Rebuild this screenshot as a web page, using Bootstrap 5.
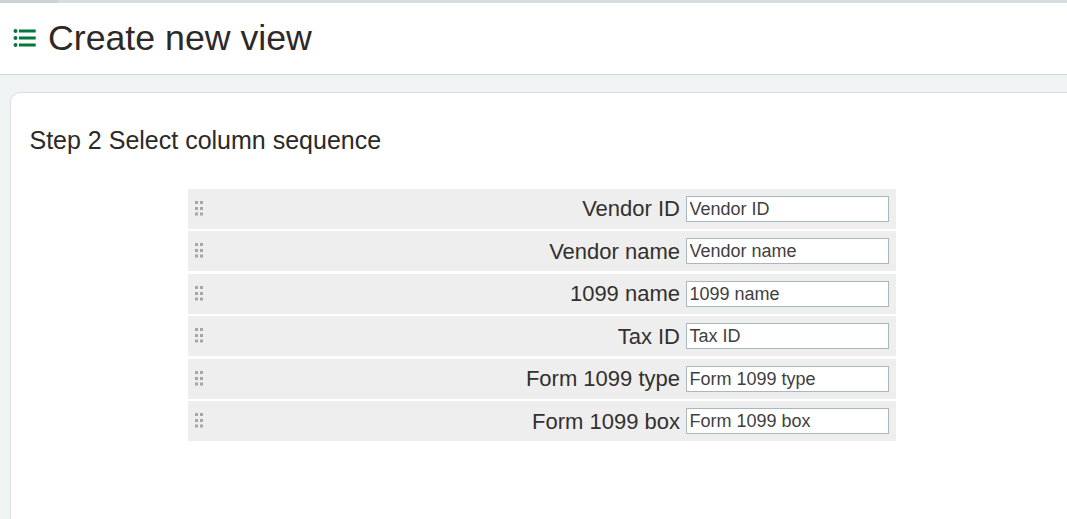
<!DOCTYPE html>
<html lang="en">
<head>
<meta charset="utf-8">
<title>Create new view</title>
<link href="https://cdn.jsdelivr.net/npm/bootstrap@5.3.0/dist/css/bootstrap.min.css" rel="stylesheet">
<style>
html,body{height:519px;overflow:hidden}
body{background:#f0f4f5;font-family:"Liberation Sans",Arial,sans-serif;color:#2d2926}
.topline{height:3px;background:#d6dde1;flex:none}
.topline-part{width:58px;background:#ccd3d7}
.pagehead{height:72px;background:#fff;border-bottom:1px solid #cfd6da;padding:1px 0 0 13px;gap:11px;flex:none}
.pagehead h1{font-size:35.7px;font-weight:400;margin:0;line-height:1}
.panel{margin:17px 0 0 10px;height:440px;background:#fff;border:1px solid #dcdfe0;border-right:0;border-bottom:0;border-top-left-radius:10px;padding:32px 0 0 18.5px}
.panel h2{font-size:25px;font-weight:400;line-height:30px;margin:0 0 33.5px}
.seq{width:708px;margin-left:158.5px;gap:2.5px}
.seqrow{height:40px;background:#eee;padding:0 7px 0 6px}
.grip{width:10px;height:16px;flex:none}
.seqlabel{font-size:22px;margin-right:6px;white-space:nowrap;color:#33302e}
.seqinput{width:203px;height:26px;border:1px solid #a9b8bd;border-radius:0;background:#fff;padding:1px 2.5px 0;font:18px "Liberation Sans",Arial,sans-serif;color:#3f3f3f;outline:0}
</style>
</head>
<body class="d-flex flex-column">
<div class="topline d-flex"><div class="topline-part"></div></div>
<header class="pagehead d-flex align-items-center">
<svg width="24" height="20" viewBox="0 0 24 20" aria-hidden="true"><g fill="#00783c"><circle cx="2.500" cy="2" r="2"/><circle cx="2.500" cy="9" r="2"/><circle cx="2.500" cy="16" r="2"/><rect x="6" y="0.500" width="16.700" height="3"/><rect x="6" y="7.500" width="16.700" height="3"/><rect x="6" y="14.500" width="16.700" height="3"/></g></svg>
<h1>Create new view</h1>
</header>
<main class="panel">
<h2>Step 2 Select column sequence</h2>
<div class="seq d-flex flex-column">
<div class="seqrow d-flex align-items-center"><svg class="grip" viewBox="0 0 10 16" aria-hidden="true"><g fill="#a6a6a6"><rect x="1" width="3" height="3"/><rect x="6" width="3" height="3"/><rect x="1" y="6" width="3" height="3"/><rect x="6" y="6" width="3" height="3"/><rect x="1" y="11.500" width="3" height="3"/><rect x="6" y="11.500" width="3" height="3"/></g></svg><span class="seqlabel ms-auto">Vendor ID</span><input class="seqinput" value="Vendor ID"></div>
<div class="seqrow d-flex align-items-center"><svg class="grip" viewBox="0 0 10 16" aria-hidden="true"><g fill="#a6a6a6"><rect x="1" width="3" height="3"/><rect x="6" width="3" height="3"/><rect x="1" y="6" width="3" height="3"/><rect x="6" y="6" width="3" height="3"/><rect x="1" y="11.500" width="3" height="3"/><rect x="6" y="11.500" width="3" height="3"/></g></svg><span class="seqlabel ms-auto">Vendor name</span><input class="seqinput" value="Vendor name"></div>
<div class="seqrow d-flex align-items-center"><svg class="grip" viewBox="0 0 10 16" aria-hidden="true"><g fill="#a6a6a6"><rect x="1" width="3" height="3"/><rect x="6" width="3" height="3"/><rect x="1" y="6" width="3" height="3"/><rect x="6" y="6" width="3" height="3"/><rect x="1" y="11.500" width="3" height="3"/><rect x="6" y="11.500" width="3" height="3"/></g></svg><span class="seqlabel ms-auto">1099 name</span><input class="seqinput" value="1099 name"></div>
<div class="seqrow d-flex align-items-center"><svg class="grip" viewBox="0 0 10 16" aria-hidden="true"><g fill="#a6a6a6"><rect x="1" width="3" height="3"/><rect x="6" width="3" height="3"/><rect x="1" y="6" width="3" height="3"/><rect x="6" y="6" width="3" height="3"/><rect x="1" y="11.500" width="3" height="3"/><rect x="6" y="11.500" width="3" height="3"/></g></svg><span class="seqlabel ms-auto">Tax ID</span><input class="seqinput" value="Tax ID"></div>
<div class="seqrow d-flex align-items-center"><svg class="grip" viewBox="0 0 10 16" aria-hidden="true"><g fill="#a6a6a6"><rect x="1" width="3" height="3"/><rect x="6" width="3" height="3"/><rect x="1" y="6" width="3" height="3"/><rect x="6" y="6" width="3" height="3"/><rect x="1" y="11.500" width="3" height="3"/><rect x="6" y="11.500" width="3" height="3"/></g></svg><span class="seqlabel ms-auto">Form 1099 type</span><input class="seqinput" value="Form 1099 type"></div>
<div class="seqrow d-flex align-items-center"><svg class="grip" viewBox="0 0 10 16" aria-hidden="true"><g fill="#a6a6a6"><rect x="1" width="3" height="3"/><rect x="6" width="3" height="3"/><rect x="1" y="6" width="3" height="3"/><rect x="6" y="6" width="3" height="3"/><rect x="1" y="11.500" width="3" height="3"/><rect x="6" y="11.500" width="3" height="3"/></g></svg><span class="seqlabel ms-auto">Form 1099 box</span><input class="seqinput" value="Form 1099 box"></div>
</div>
</main>
<script src="https://cdn.jsdelivr.net/npm/bootstrap@5.3.0/dist/js/bootstrap.bundle.min.js"></script>
</body>
</html>
